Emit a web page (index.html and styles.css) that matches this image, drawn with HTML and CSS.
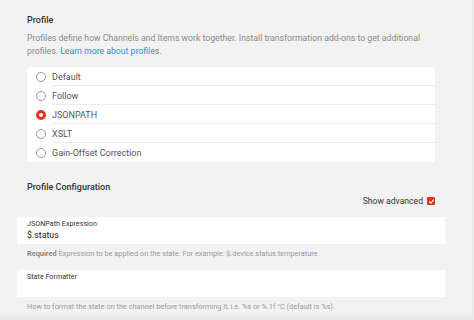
FILE: index.html
```html
<!DOCTYPE html>
<html>
<head>
<meta charset="utf-8">
<link rel="stylesheet" href="styles.css">
</head>
<body>
<div class="page">
  <section class="block">
    <div class="block-title">Profile</div>
    <p class="desc">Profiles define how Channels and Items work together. Install transformation add-ons to get additional profiles. <a class="link" href="#">Learn more about profiles.</a></p>
    <ul class="radio-list">
      <li class="row"><span class="radio"></span><span class="row-label">Default</span></li>
      <li class="row"><span class="radio"></span><span class="row-label">Follow</span></li>
      <li class="row"><span class="radio checked"></span><span class="row-label">JSONPATH</span></li>
      <li class="row"><span class="radio"></span><span class="row-label">XSLT</span></li>
      <li class="row last"><span class="radio"></span><span class="row-label">Gain-Offset Correction</span></li>
    </ul>
  </section>
  <section class="block config">
    <div class="block-title">Profile Configuration</div>
    <div class="adv-row">
      <span class="adv-label">Show advanced</span>
      <span class="checkbox"><svg viewBox="0 0 10 10" width="7" height="7"><path d="M2 5.2 L4.2 7.3 L8 2.6" fill="none" stroke="#fff" stroke-width="1.5" stroke-linecap="round" stroke-linejoin="round"/></svg></span>
    </div>
    <div class="field">
      <div class="field-label">JSONPath Expression</div>
      <div class="field-value">$.status</div>
    </div>
    <div class="hint"><b>Required</b> Expression to be applied on the state. For example: $.device.status.temperature</div>
    <div class="field">
      <div class="field-label">State Formatter</div>
      <div class="field-value"></div>
    </div>
    <div class="hint">How to format the state on the channel before transforming it, i.e. %s or %.1f °C (default is %s).</div>
  </section>
  <div class="bottom-shade"></div>
</div>
</body>
</html>
```

FILE: styles.css
```css
html, body {
  margin: 0;
  padding: 0;
  height: 100%;
  overflow: hidden;
}
body {
  background: #f2f2f2;
  font-family: Roboto, "Noto Sans", sans-serif;
  color: #333;
}
.page {
  position: relative;
  height: 320px;
  box-sizing: border-box;
  padding: 14px 37px 0 27px;
  border-right: 1px solid #e8e8e8;
  width: 473px;
}
.block-title {
  font-size: 9px;
  font-weight: 500;
  color: #333;
  line-height: 13px;
}
.desc {
  margin: 5px 0 0;
  font-size: 8.7px;
  line-height: 13px;
  color: #8a8a8a;
}
.link {
  color: #2f8ee0;
  text-decoration: none;
}
.radio-list {
  list-style: none;
  margin: 9px 0 0;
  padding: 0;
  background: #fff;
  border-radius: 2px;
  box-shadow: 0 0 1px rgba(0,0,0,0.1);
}
.row {
  display: flex;
  align-items: center;
  height: 19px;
  position: relative;
  padding-left: 9px;
}
.row::after {
  content: "";
  position: absolute;
  left: 25px;
  right: 0;
  bottom: 0;
  height: 1px;
  background: #ebebeb;
}
.row.last::after { display: none; }
.radio {
  width: 10px;
  height: 10px;
  border: 1px solid #9a9a9a;
  border-radius: 50%;
  box-sizing: border-box;
  flex: none;
}
.radio.checked {
  border: 3.3px solid #e53120;
  background: #fff;
}
.row-label {
  margin-left: 6px;
  font-size: 9px;
  color: #555;
}
.config {
  margin-top: 19px;
}
.adv-row {
  display: flex;
  justify-content: flex-end;
  align-items: center;
  margin-top: 2px;
  gap: 4px;
}
.adv-label {
  font-size: 8.6px;
  color: #333;
}
.checkbox {
  width: 8px;
  height: 8px;
  background: #e53120;
  border-radius: 1px;
  display: flex;
  align-items: center;
  justify-content: center;
}
.field {
  margin: 11px -10px 0 -10px;
  background: #fff;
  height: 27px;
  box-sizing: border-box;
  padding: 2px 0 0 10px;
}
.field-label {
  font-size: 7.2px;
  line-height: 9px;
  color: #333;
}
.field-value {
  font-size: 8.8px;
  line-height: 14px;
  color: #222;
}
.hint {
  font-size: 7.35px;
  line-height: 11px;
  color: #999;
  margin-top: 4px;
  margin-bottom: 10px;
  white-space: nowrap;
}
.hint b {
  color: #888;
  font-weight: 700;
}
.bottom-shade {
  position: absolute;
  left: 0;
  right: 0;
  bottom: 0;
  height: 8px;
  background: linear-gradient(to bottom, rgba(0,0,0,0), rgba(0,0,0,0.05));
}
```
